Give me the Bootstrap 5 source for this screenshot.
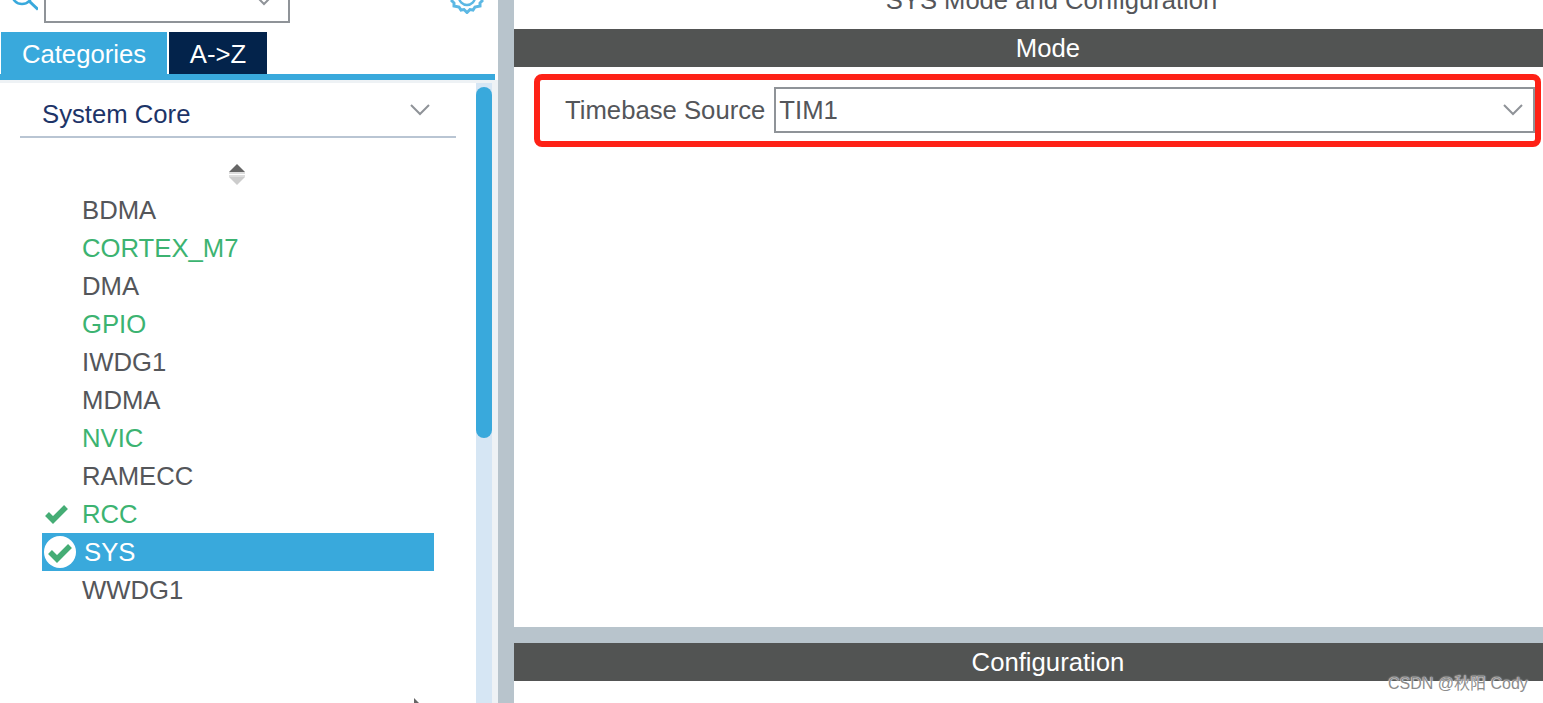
<!DOCTYPE html>
<html lang="en">
<head>
<meta charset="utf-8">
<title>SYS Mode and Configuration</title>
<link href="https://cdn.jsdelivr.net/npm/bootstrap@5.3.0/dist/css/bootstrap.min.css" rel="stylesheet">
<style>
html,body{height:703px;overflow:hidden;background:#fff;font-family:"Liberation Sans",Arial,sans-serif;color:#54565a}
.shell{width:1543px;height:703px;position:relative;overflow:hidden}
.side{width:498px;flex:none;height:703px}
.topstrip{height:32px;flex:none;overflow:hidden;padding-left:10px}
.topbox{width:246px;height:23px;border:2px solid #8f9398;border-top:0;margin-left:6px;margin-bottom:9px;position:relative}
.topchev{position:absolute;right:16px;top:-6px}
.lens{width:28px;height:12px;flex:none;margin-bottom:20px}
.gear{width:34px;height:14px;margin-left:160px;margin-bottom:18px;flex:none}
.tabrow{height:42px;flex:none;padding-left:1px;gap:2px}
.tabitem{height:42px;color:#fff;font-size:25.7px;line-height:44px;text-align:center}
.tabcat{width:166px;background:#39a9dc}
.tabaz{width:98px;background:#03234b}
.tabline{height:6px;width:495px;background:#39a9dc;flex:none}
.body-wrap{flex:1;min-height:0;border-top:3px solid #eef2f5}
.listcol{width:476px;flex:none;overflow:hidden}
.groupbar{margin:0 20px;width:436px;height:55px;border-bottom:2px solid #b9c5d3;padding-left:22px;padding-top:16px;font-size:25.7px;line-height:30px;color:#1d3468}
.groupchev{margin-right:26px;margin-top:5px}
.updown{height:53px;padding-top:25px}
.updown svg{display:block;margin-left:228px}
.rowitem{height:38px;line-height:38px;font-size:25.7px;margin-left:42px;width:392px;padding-left:40px;color:#54565a}
.rowgreen{color:#3cb371}
.rowsel{background:#39a9dc;color:#fff;padding-left:42px}
.checkicon{position:absolute;left:0;top:0}
.scrolltrack{width:16px;flex:none;background:#d6e6f4;padding-top:4px}
.scrollthumb{height:351px;background:#39a9dc;border-radius:8px}
.sidegap{flex:1;background:#eef2f5}
.cursormark{position:absolute;left:414px;top:698px}
.divider{width:16px;flex:none;background:#b8c4cc;height:703px}
.main{flex:1;min-width:0;height:703px}
.titlebar{height:29px;flex:none;overflow:hidden;text-align:center;font-size:25.6px;line-height:28px;color:#54565a;padding-left:46px}
.titlebar span{display:block;margin-top:-14px}
.headbar{height:38px;background:#525453;color:#fff;text-align:center;font-size:25.7px;line-height:38px;flex:none;padding-left:39px}
.modepane{height:560px;flex:none}
.redbox{margin:7px 2px 0 20px;height:73px;border:6px solid #fe2116;border-radius:8px;padding:7px 0 0 25px;gap:9px}
.fieldlabel{font-size:25.7px;line-height:46px;white-space:nowrap}
.fieldselect{width:761px;flex:none;height:46px;border:2px solid #8f9398;font-size:25.7px;line-height:41px;padding-left:3px;padding-right:10px}
.hband{height:16px;background:#b8c4cc;flex:none}
.wmark{position:absolute;left:1388px;top:674px;font-size:16px;line-height:20px;color:#8c8c8c;text-shadow:0 0 2px #fff,0 0 1px #fff;font-family:"Liberation Sans","Noto Sans CJK SC",sans-serif;white-space:nowrap}
</style>
</head>
<body>
<div class="shell d-flex">
  <aside class="side d-flex flex-column">
    <div class="topstrip d-flex align-items-start">
      <svg class="lens" viewBox="0 0 28 12" aria-hidden="true"><circle cx="12" cy="-6" r="10" fill="none" stroke="#39a9dc" stroke-width="2.5"/><path d="M19 1 L28 9.5" stroke="#39a9dc" stroke-width="3" fill="none"/></svg>
      <div class="topbox"><svg class="topchev" width="16" height="12" viewBox="0 0 16 12" aria-hidden="true"><path d="M1 3 L8 10 L15 3" fill="none" stroke="#8f9398" stroke-width="2"/></svg></div>
      <svg class="gear" viewBox="0 0 34 14" aria-hidden="true"><circle cx="17" cy="-3" r="8" fill="none" stroke="#5cb8e4" stroke-width="2.5"/><path d="M1 0 L4 3 L4 6 L9 7 L11 10 L14 9.5 L17 12.5 L20 9.5 L23 10 L25 7 L30 6 L30 3 L33 0" fill="none" stroke="#5cb8e4" stroke-width="3"/></svg>
    </div>
    <div class="tabrow d-flex">
      <div class="tabitem tabcat">Categories</div>
      <div class="tabitem tabaz">A-&gt;Z</div>
    </div>
    <div class="tabline"></div>
    <div class="body-wrap d-flex">
      <div class="listcol">
        <div class="groupbar d-flex justify-content-between">
          <span>System Core</span>
          <svg class="groupchev" width="20" height="12" viewBox="0 0 20 12" aria-hidden="true"><path d="M1 1 L10 10 L19 1" fill="none" stroke="#8f9398" stroke-width="2"/></svg>
        </div>
        <div class="updown"><svg width="18" height="22" viewBox="0 0 18 22" aria-hidden="true"><path d="M1 9 L9 1 L17 9 Z" fill="#666"/><rect x="1" y="9" width="16" height="2" fill="#ddd"/><rect x="1" y="12" width="16" height="2" fill="#ddd"/><path d="M1 14 L17 14 L9 22 Z" fill="#ccc"/></svg></div>
        <div class="rowitem">BDMA</div>
        <div class="rowitem rowgreen">CORTEX_M7</div>
        <div class="rowitem">DMA</div>
        <div class="rowitem rowgreen">GPIO</div>
        <div class="rowitem">IWDG1</div>
        <div class="rowitem">MDMA</div>
        <div class="rowitem rowgreen">NVIC</div>
        <div class="rowitem">RAMECC</div>
        <div class="rowitem rowgreen position-relative">
          <svg class="checkicon" width="30" height="38" viewBox="0 0 30 38" aria-hidden="true"><path d="M5 19 L11 25 L24 12" fill="none" stroke="#45ad75" stroke-width="5.5"/></svg>RCC</div>
        <div class="rowitem rowsel position-relative">
          <svg class="checkicon" width="36" height="38" viewBox="0 0 36 38" aria-hidden="true"><circle cx="18" cy="19" r="16" fill="#fff"/><path d="M8 19 L15 26 L28 13" fill="none" stroke="#45ad75" stroke-width="5.5"/></svg>SYS</div>
        <div class="rowitem">WWDG1</div>
      </div>
      <div class="scrolltrack"><div class="scrollthumb"></div></div>
      <div class="sidegap"></div>
    </div>
    <svg class="cursormark" width="6" height="5" viewBox="0 0 6 5" aria-hidden="true"><path d="M0 0 L0 5 L5 5 Z" fill="#666"/></svg>
  </aside>
  <div class="divider"></div>
  <main class="main d-flex flex-column">
    <div class="titlebar"><span>SYS Mode and Configuration</span></div>
    <div class="headbar">Mode</div>
    <div class="modepane">
      <div class="redbox d-flex">
        <span class="fieldlabel">Timebase Source</span>
        <div class="fieldselect d-flex justify-content-between align-items-center">
          <span>TIM1</span>
          <svg width="20" height="12" viewBox="0 0 20 12" aria-hidden="true"><path d="M1 1 L10 10 L19 1" fill="none" stroke="#8f9398" stroke-width="2"/></svg>
        </div>
      </div>
    </div>
    <div class="hband"></div>
    <div class="headbar">Configuration</div>
  </main>
  <div class="wmark">CSDN @秋阳 Cody</div>
</div>
<script src="https://cdn.jsdelivr.net/npm/bootstrap@5.3.0/dist/js/bootstrap.bundle.min.js"></script>
</body>
</html>
